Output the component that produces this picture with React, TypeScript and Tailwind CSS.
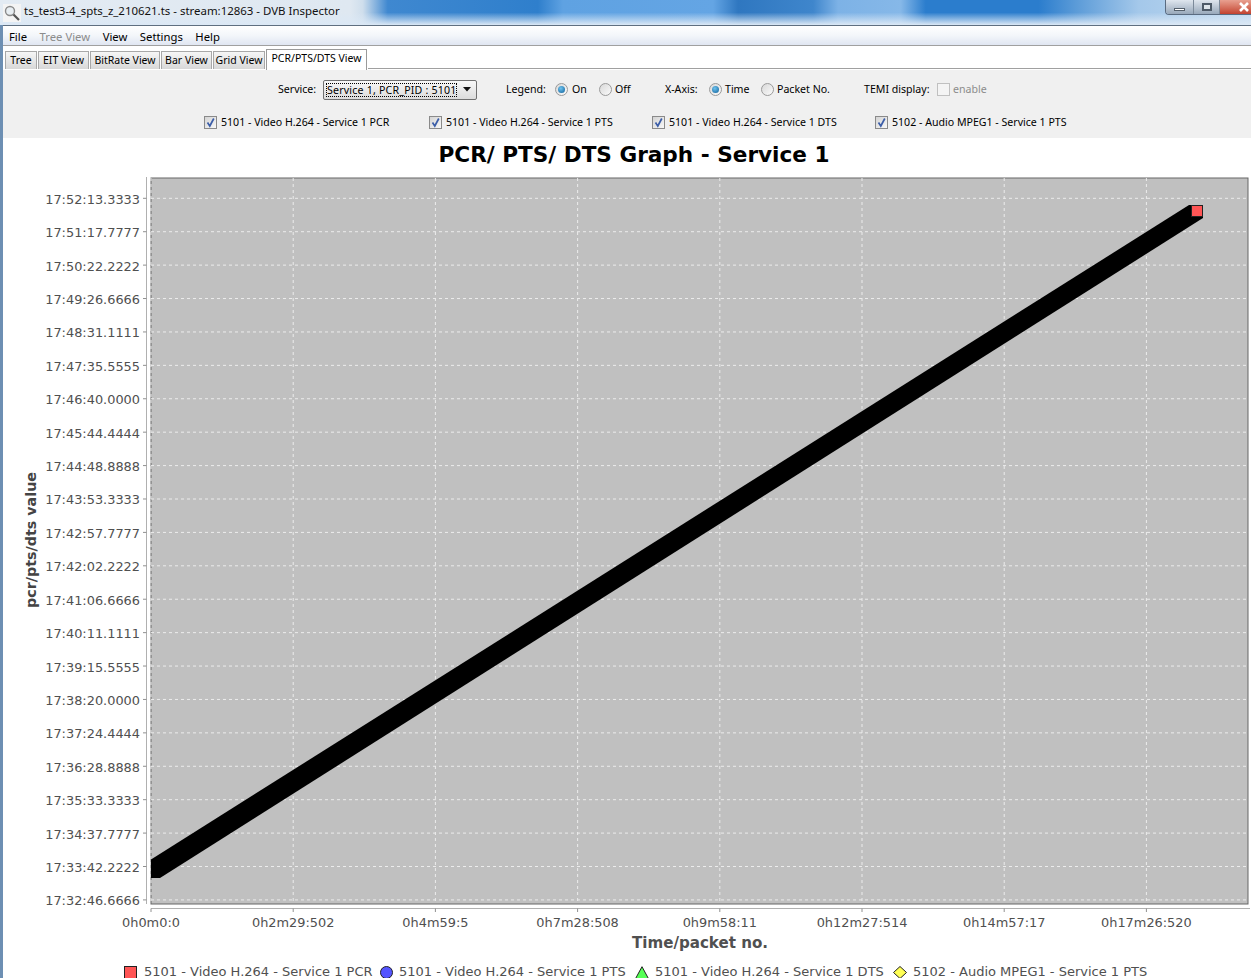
import React from "react";

const yLabels = [
  "17:52:13.3333", "17:51:17.7777", "17:50:22.2222", "17:49:26.6666", "17:48:31.1111", "17:47:35.5555",
  "17:46:40.0000", "17:45:44.4444", "17:44:48.8888", "17:43:53.3333", "17:42:57.7777", "17:42:02.2222",
  "17:41:06.6666", "17:40:11.1111", "17:39:15.5555", "17:38:20.0000", "17:37:24.4444", "17:36:28.8888",
  "17:35:33.3333", "17:34:37.7777", "17:33:42.2222", "17:32:46.6666",
];
const xLabels = ["0h0m0:0", "0h2m29:502", "0h4m59:5", "0h7m28:508", "0h9m58:11", "0h12m27:514", "0h14m57:17", "0h17m26:520"];
const tabs = [
  { name: "Tree", width: "w-[32px]" },
  { name: "EIT View", width: "w-[51px]" },
  { name: "BitRate View", width: "w-[70px]" },
  { name: "Bar View", width: "w-[51px]" },
  { name: "Grid View", width: "w-[52px]" },
];
const series = [
  "5101 - Video H.264 - Service 1 PCR",
  "5101 - Video H.264 - Service 1 PTS",
  "5101 - Video H.264 - Service 1 DTS",
  "5102 - Audio MPEG1 - Service 1 PTS",
];

function Radio({ on }: { on?: boolean }) {
  return (
    <span className="w-[13px] h-[13px] rounded-full border border-[#9a9a9a] bg-gradient-to-br from-[#d8d8d8] to-[#fbfbfb] flex items-center justify-center shrink-0">
      {on && <span className="w-[7px] h-[7px] rounded-full bg-[radial-gradient(circle_at_40%_35%,#6fc3ee,#0d5f9a)]" />}
    </span>
  );
}

function Check({ on = true }: { on?: boolean }) {
  return (
    <span className={`w-[13px] h-[13px] border shrink-0 flex items-center justify-center ${on ? "border-[#8a8a8a] bg-gradient-to-br from-[#d4d4d4] to-[#f8f8f8]" : "border-[#c0c0c0] bg-[#f4f4f4]"}`}>
      {on && (
        <svg width="11" height="11" viewBox="0 0 11 11">
          <path d="M2.5 5.5 L4.8 9 L8.8 1.5" fill="none" stroke="#3c5ea8" strokeWidth="1.7" />
        </svg>
      )}
    </span>
  );
}

// svg starts at page y=170, page coords below are shifted by this
const base = 170;

function Chart() {
  const left = 151;
  const top = 178 - base;
  const right = 1248;
  const bottom = 904 - base;
  const axisY = 908.5 - base;
  const yAt = (i: number) => 198.3 - base + i * 33.41;
  const xAt = (i: number) => 151 + i * 142.2;
  return (
    <svg width="1251" height="760" className="block">
      <rect x={left} y={top} width={right - left} height={bottom - top} fill="#c0c0c0" stroke="#666666" strokeWidth="1" />
      {yLabels.map((_, i) => (
        <line key={i} x1={left} x2={right} y1={yAt(i)} y2={yAt(i)} stroke="#ececec" strokeWidth="1" strokeDasharray="3 3" />
      ))}
      {xLabels.map((_, i) => (
        <line key={i} x1={xAt(i)} x2={xAt(i)} y1={top} y2={bottom} stroke="#ececec" strokeWidth="1" strokeDasharray="3 3" />
      ))}
      <polygon
        points={`151,${859.5 - base} 1189,${205 - base} 1203,${205 - base} 1203,${218 - base} 160,${878 - base} 151,${878 - base}`}
        fill="#000000"
      />
      <rect x="1191.5" y={205.5 - base} width="11" height="11" fill="#ff5555" stroke="#222222" />

      <line x1="146.5" x2="146.5" y1={top - 1} y2={bottom} stroke="#b0b0b0" />
      <line x1={left} x2={1250} y1={axisY} y2={axisY} stroke="#b0b0b0" />
      <g fontFamily="'DejaVu Sans',sans-serif" fontSize="12.9" fill="#505050">
        {yLabels.map((label, i) => (
          <g key={label}>
            <line x1="143" x2="146.5" y1={yAt(i)} y2={yAt(i)} stroke="#909090" />
            <text x="140" y={yAt(i) + 5.5} textAnchor="end">{label}</text>
          </g>
        ))}
        {xLabels.map((label, i) => (
          <g key={label}>
            <line x1={xAt(i)} x2={xAt(i)} y1={axisY} y2={axisY + 3.5} stroke="#909090" />
            <text x={xAt(i)} y={927 - base} textAnchor="middle">{label}</text>
          </g>
        ))}
      </g>
      <text
        transform="translate(36 370) rotate(-90)"
        textAnchor="middle"
        fontFamily="'DejaVu Sans',sans-serif"
        fontWeight="700"
        fontSize="14.3"
        fill="#444444"
      >
        pcr/pts/dts value
      </text>
    </svg>
  );
}

export default function App() {
  return (
    <div className="w-[1251px] h-[978px] overflow-hidden flex flex-col bg-white text-[11.3px] text-black font-['Noto_Sans','Open_Sans',sans-serif]">
      {/* title bar */}
      <div className="h-[25px] shrink-0 relative flex items-center bg-[linear-gradient(180deg,transparent_50%,#dbe8f5_100%),linear-gradient(90deg,#e3ebf3_0%,#dfe8f1_28%,#cfdeec_29%,#3f88d0_31%,#2f7fcc_43%,#5fa2e2_45%,#64a5e4_57%,#2f77c0_59%,#3f86cc_65%,#7db2e6_67%,#86b8e8_72%,#2b7dcd_74%,#2b7dcd_83%,#5b9bd8_86%,#a4c8ea_91%,#c4dbf0_100%)]">
        <svg width="18" height="18" viewBox="0 0 18 18" className="ml-[3px] shrink-0">
          <rect width="18" height="18" fill="#f4f4f4" />
          <circle cx="7" cy="7" r="4.5" fill="#e8eef2" stroke="#8a8a8a" strokeWidth="1.4" />
          <path d="M10.5 10.5 L16 16" stroke="#555555" strokeWidth="2.2" />
        </svg>
        <span className="ml-[3px] -mt-[4px] text-[11.45px] text-[#111111] whitespace-nowrap">ts_test3-4_spts_z_210621.ts - stream:12863 - DVB Inspector</span>
        <div className="absolute right-0 top-0 h-[15px] w-[86px] flex rounded-bl-[4px] border-l border-b border-[#5a6b80] overflow-hidden">
          <div className="w-[28px] bg-gradient-to-b from-[#dfe6ee] to-[#98a8ba] border-r border-[#7c8a9a] flex items-center justify-center">
            <span className="mt-[5px] w-[11px] h-[3px] bg-white border border-[#55606c]" />
          </div>
          <div className="w-[26px] bg-gradient-to-b from-[#dfe6ee] to-[#98a8ba] border-r border-[#7c8a9a] flex items-center justify-center">
            <span className="w-[10px] h-[8px] border-2 border-[#4e5a68] bg-[#dde4ea]" />
          </div>
          <div className="flex-1 bg-gradient-to-b from-[#e8a090] to-[#c2412f] flex items-center pl-[19px]">
            <svg width="10" height="10" viewBox="0 0 10 10" className="shrink-0">
              <path d="M1 1 L9 9 M9 1 L1 9" stroke="#ffffff" strokeWidth="2.6" />
            </svg>
          </div>
        </div>
      </div>

      <div className="flex-1 min-h-0 flex flex-col border-l-[3px] border-[#6d8fb3]">
        {/* menu bar */}
        <div className="h-[21px] shrink-0 pt-[3px] border-t border-[#5f6f80] flex items-center pl-[6px] gap-[12.5px] bg-gradient-to-b from-[#ffffff] via-[#f3f6fa] to-[#e0e6f2] border-b border-b-[#a0a0a0]">
          <span>File</span>
          <span className="text-[#8c8c8c]">Tree View</span>
          <span>View</span>
          <span>Settings</span>
          <span>Help</span>
        </div>

        {/* tabs */}
        <div className="h-[24px] shrink-0 flex items-end pl-[2px] gap-[1px] bg-white relative text-[10.5px]">
          {tabs.map((t) => (
            <div key={t.name} className={`${t.width} h-[18px] mb-[1px] pt-[1px] border border-[#a8a8a8] border-b-0 bg-gradient-to-b from-[#f6f6f6] to-[#d8d8d8] flex items-center justify-center whitespace-nowrap`}>
              {t.name}
            </div>
          ))}
          <div className="w-[101px] h-[21px] border border-[#9a9a9a] border-b-0 bg-white flex items-center justify-center pb-[2px] whitespace-nowrap">PCR/PTS/DTS View</div>
          <div className="absolute left-[365px] right-0 bottom-[1px] h-px bg-[#a0a0a0]" />
        </div>

        {/* toolbar */}
        <div className="h-[68px] shrink-0 bg-[#f0f0f0] text-[10.6px]">
          <div className="h-[36px] pt-[3px] flex items-center pl-[275px]">
            <span className="w-[45px]">Service:</span>
            <div className="w-[154px] h-[20px] border border-[#707070] rounded-[2px] bg-gradient-to-b from-[#f8f8f8] to-[#dcdcdc] flex items-center pl-[2px] pr-[5px]">
              <span className="border border-dotted border-black leading-[12px] h-[14px] w-[131px] whitespace-nowrap overflow-hidden tracking-[0.2px]">Service 1, PCR_PID : 5101</span>
              <svg width="8" height="5" viewBox="0 0 8 5" className="ml-auto"><path d="M0 0 H8 L4 4.5 Z" fill="#111111" /></svg>
            </div>
            <span className="ml-[29px] w-[49px]">Legend:</span>
            <Radio on />
            <span className="ml-[4px] w-[27px]">On</span>
            <Radio />
            <span className="ml-[3px] w-[50px]">Off</span>
            <span className="w-[44px]">X-Axis:</span>
            <Radio on />
            <span className="ml-[3px] w-[36px]">Time</span>
            <Radio />
            <span className="ml-[3px] w-[87px]">Packet No.</span>
            <span className="w-[73px]">TEMI display:</span>
            <Check on={false} />
            <span className="ml-[3px] text-[#8c8c8c]">enable</span>
          </div>
          <div className="h-[32px] pt-[2px] flex items-center pl-[201px]">
            {series.map((s, i) => (
              <div key={s} className={`flex items-center gap-[4px] whitespace-nowrap ${["w-[225px]", "w-[223px]", "w-[223px]", ""][i]}`}>
                <Check />
                <span>{s}</span>
              </div>
            ))}
          </div>
        </div>

        {/* chart */}
        <div className="flex-1 min-h-0 bg-white flex flex-col overflow-hidden">
          <div className="h-[32px] pt-[3px] shrink-0 flex items-center justify-center pl-[14px] font-['DejaVu_Sans',sans-serif] font-bold text-[21.6px] whitespace-nowrap">
            PCR/ PTS/ DTS Graph - Service 1
          </div>
          <div className="-ml-[3px] shrink-0">
            <Chart />
          </div>
          <div className="shrink-0 mt-[4px] pl-[146px] font-['DejaVu_Sans',sans-serif] text-[15.1px] font-bold text-[#505050] text-center leading-[18px] whitespace-nowrap">Time/packet no.</div>
          <div className="shrink-0 mt-[13px] flex items-center pl-[121px] font-['DejaVu_Sans',sans-serif] text-[13px] text-[#505050] whitespace-nowrap leading-[14px]">
            <span className="w-[13px] h-[13px] bg-[#ff5555] border border-[#222222]" />
            <span className="ml-[7px] w-[236px]">{series[0]}</span>
            <span className="w-[13px] h-[13px] rounded-full bg-[#5555ff] border border-[#222222]" />
            <span className="ml-[6px] w-[236px]">{series[1]}</span>
            <svg width="14" height="13" viewBox="0 0 14 13"><polygon points="7,0.7 13.4,12.5 0.6,12.5" fill="#55ff55" stroke="#222222" /></svg>
            <span className="ml-[6px] w-[238px]">{series[2]}</span>
            <svg width="14" height="13" viewBox="0 0 14 13"><polygon points="7,0.5 13.5,6.5 7,12.5 0.5,6.5" fill="#ffff55" stroke="#222222" /></svg>
            <span className="ml-[6px]">{series[3]}</span>
          </div>
        </div>
      </div>
    </div>
  );
}
